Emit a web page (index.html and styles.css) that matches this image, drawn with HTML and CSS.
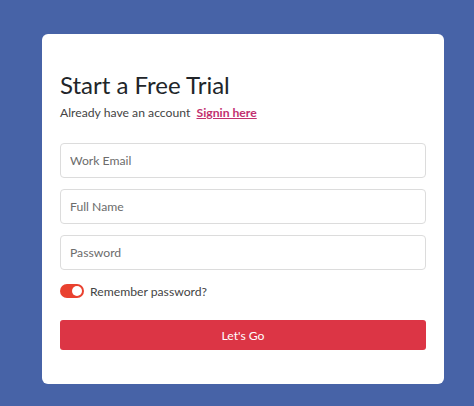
FILE: index.html
```html
<!DOCTYPE html>
<html lang="en">
<head>
<meta charset="utf-8">
<title>Start a Free Trial</title>
<link rel="stylesheet" href="styles.css">
</head>
<body>
<main class="page">
  <section class="card">
    <h1 class="title">Start a Free Trial</h1>
    <p class="subtitle">Already have an account <a class="signin" href="#">Signin here</a></p>
    <form class="form">
      <input class="field" type="email" placeholder="Work Email">
      <input class="field" type="text" placeholder="Full Name">
      <input class="field" type="password" placeholder="Password">
      <label class="remember">
        <span class="toggle"><span class="knob"></span></span>
        <span>Remember password?</span>
      </label>
      <button class="submit" type="button">Let's Go</button>
    </form>
  </section>
</main>
</body>
</html>
```

FILE: styles.css
```css
* { box-sizing: border-box; }
html, body { margin: 0; padding: 0; }
body {
  background: #4763a7;
  font-family: Lato, "Noto Sans", sans-serif;
  width: 474px;
  height: 406px;
  overflow: hidden;
}
.page {
  padding: 34px 0 0 42px;
}
.card {
  width: 402px;
  height: 350px;
  background: #fff;
  border-radius: 6px;
  padding: 36px 18px 0 18px;
}
.title {
  margin: 0;
  font-size: 24px;
  font-weight: 400;
  line-height: 30px;
  color: #212529;
}
.subtitle {
  margin: 4px 0 0 0;
  font-size: 12.2px;
  line-height: 18px;
  color: #444;
}
.signin {
  margin-left: 3px;
  color: #c2306f;
  font-weight: 700;
  text-decoration: underline;
}
.form {
  display: flex;
  flex-direction: column;
  margin-top: 21px;
}
.field {
  height: 35px;
  border: 1px solid #dcdcdc;
  border-radius: 4px;
  padding: 0 9px;
  font-family: inherit;
  font-size: 12.2px;
  color: #333;
  margin-bottom: 11px;
  background: #fff;
}
.field::placeholder { color: #6c6c6c; }
.remember {
  display: flex;
  align-items: center;
  gap: 6px;
  margin-top: 3px;
  font-size: 12.2px;
  color: #444;
  height: 14px;
}
.toggle {
  position: relative;
  width: 24px;
  height: 14px;
  border-radius: 7px;
  background: #e9412f;
}
.knob {
  position: absolute;
  top: 2px;
  right: 2px;
  width: 10px;
  height: 10px;
  border-radius: 50%;
  background: #fff;
}
.submit {
  margin-top: 22px;
  height: 30px;
  border: none;
  border-radius: 3px;
  background: #dc3545;
  color: #fff;
  font-family: inherit;
  font-size: 12.2px;
}
```
